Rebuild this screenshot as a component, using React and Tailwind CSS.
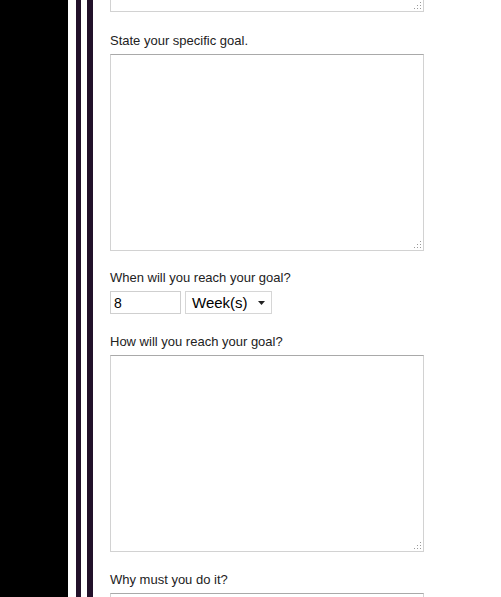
import React from "react";

function Label({ children }) {
  return (
    <div className="text-[13px] leading-[16px] text-[#222] mb-[5px]">{children}</div>
  );
}

function Area({ className = "" }) {
  return (
    <div className={"relative w-[314px] h-[197px] " + className}>
      <textarea className="block w-full h-full resize-none bg-white border border-[#d2d2d2] border-t-[#a9a9a9] outline-none" />
      {/* dotted resize grip */}
      <svg className="absolute right-[3px] bottom-[3px]" width="7" height="7" viewBox="0 0 7 7">
        <g fill="#9a9a9a">
          <rect x="6" y="0" width="1" height="1" />
          <rect x="6" y="3" width="1" height="1" />
          <rect x="6" y="6" width="1" height="1" />
          <rect x="3" y="3" width="1" height="1" />
          <rect x="3" y="6" width="1" height="1" />
          <rect x="0" y="6" width="1" height="1" />
        </g>
      </svg>
    </div>
  );
}

export default function App() {
  return (
    <div
      className="flex w-[501px] h-[597px] overflow-hidden bg-white"
      style={{ fontFamily: '"Liberation Sans", Arial, sans-serif' }}
    >
      {/* left border art */}
      <div className="w-[68px] shrink-0 bg-black" />
      <div className="w-[8px] shrink-0 bg-white" />
      <div className="w-[5px] shrink-0 bg-[#22112a]" />
      <div className="w-[6px] shrink-0 bg-white" />
      <div className="w-[6px] shrink-0 bg-[#22112a]" />

      <div className="flex-1 pl-[17px]">
        <Area className="-mt-[185px]" />

        <div className="mt-[21px]">
          <Label>State your specific goal.</Label>
          <Area />
        </div>

        <div className="mt-[19px]">
          <Label>When will you reach your goal?</Label>
          <div className="flex gap-[4px]">
            <input
              defaultValue="8"
              className="w-[71px] h-[23px] border border-[#cfcfcf] px-[3px] text-[14px] text-black outline-none"
            />
            <div className="relative w-[87px] h-[23px] border border-[#d6d6d6] bg-white">
              <div className="pl-[6px] text-[15px] leading-[21px] text-black">Week(s)</div>
              <svg
                className="absolute right-[6px] top-[9px]"
                width="7"
                height="4"
                viewBox="0 0 7 4"
              >
                <path d="M0 0h7L3.5 4z" fill="#222" />
              </svg>
            </div>
          </div>
        </div>

        <div className="mt-[20px]">
          <Label>How will you reach your goal?</Label>
          <Area />
        </div>

        <div className="mt-[20px]">
          <Label>Why must you do it?</Label>
          <Area />
        </div>
      </div>
    </div>
  );
}
